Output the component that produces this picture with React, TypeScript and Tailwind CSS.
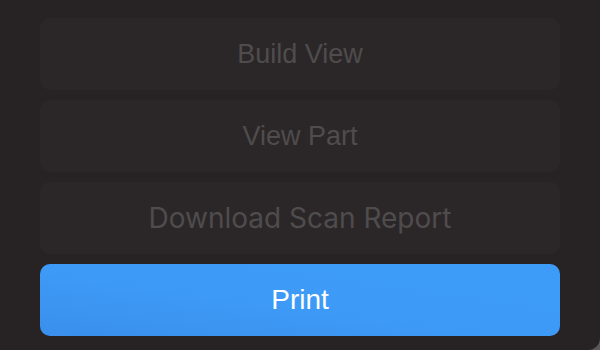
const actions = ["Build View", "View Part"];

export default function App() {
  return (
    <div className="h-[350px] w-[600px] overflow-hidden bg-[#5a5859]">
      <div className="flex h-full w-full flex-col gap-[10px] rounded-br-[12px] bg-[#272324] px-10 pt-[18px]">
        {actions.map((label) => (
          <button
            key={label}
            type="button"
            className="flex h-[72px] w-full items-center justify-center rounded-[10px] bg-[#2b2728] font-['Liberation_Sans',Arial,sans-serif] text-[27px] text-[#4f4c4d]"
          >
            {label}
          </button>
        ))}
        <button
          type="button"
          className="flex h-[72px] w-full items-center justify-center rounded-[10px] bg-[#2b2728] font-['Inter',sans-serif] text-[28px] text-[#4f4c4d]"
        >
          Download Scan Report
        </button>
        <button
          type="button"
          className="flex h-[72px] w-full items-center justify-center rounded-[10px] bg-gradient-to-tr from-[#3a90ec] via-[#3d9bf7] to-[#3e9cf9] font-['Liberation_Sans',Arial,sans-serif] text-[28px] text-white"
        >
          Print
        </button>
      </div>
    </div>
  );
}
